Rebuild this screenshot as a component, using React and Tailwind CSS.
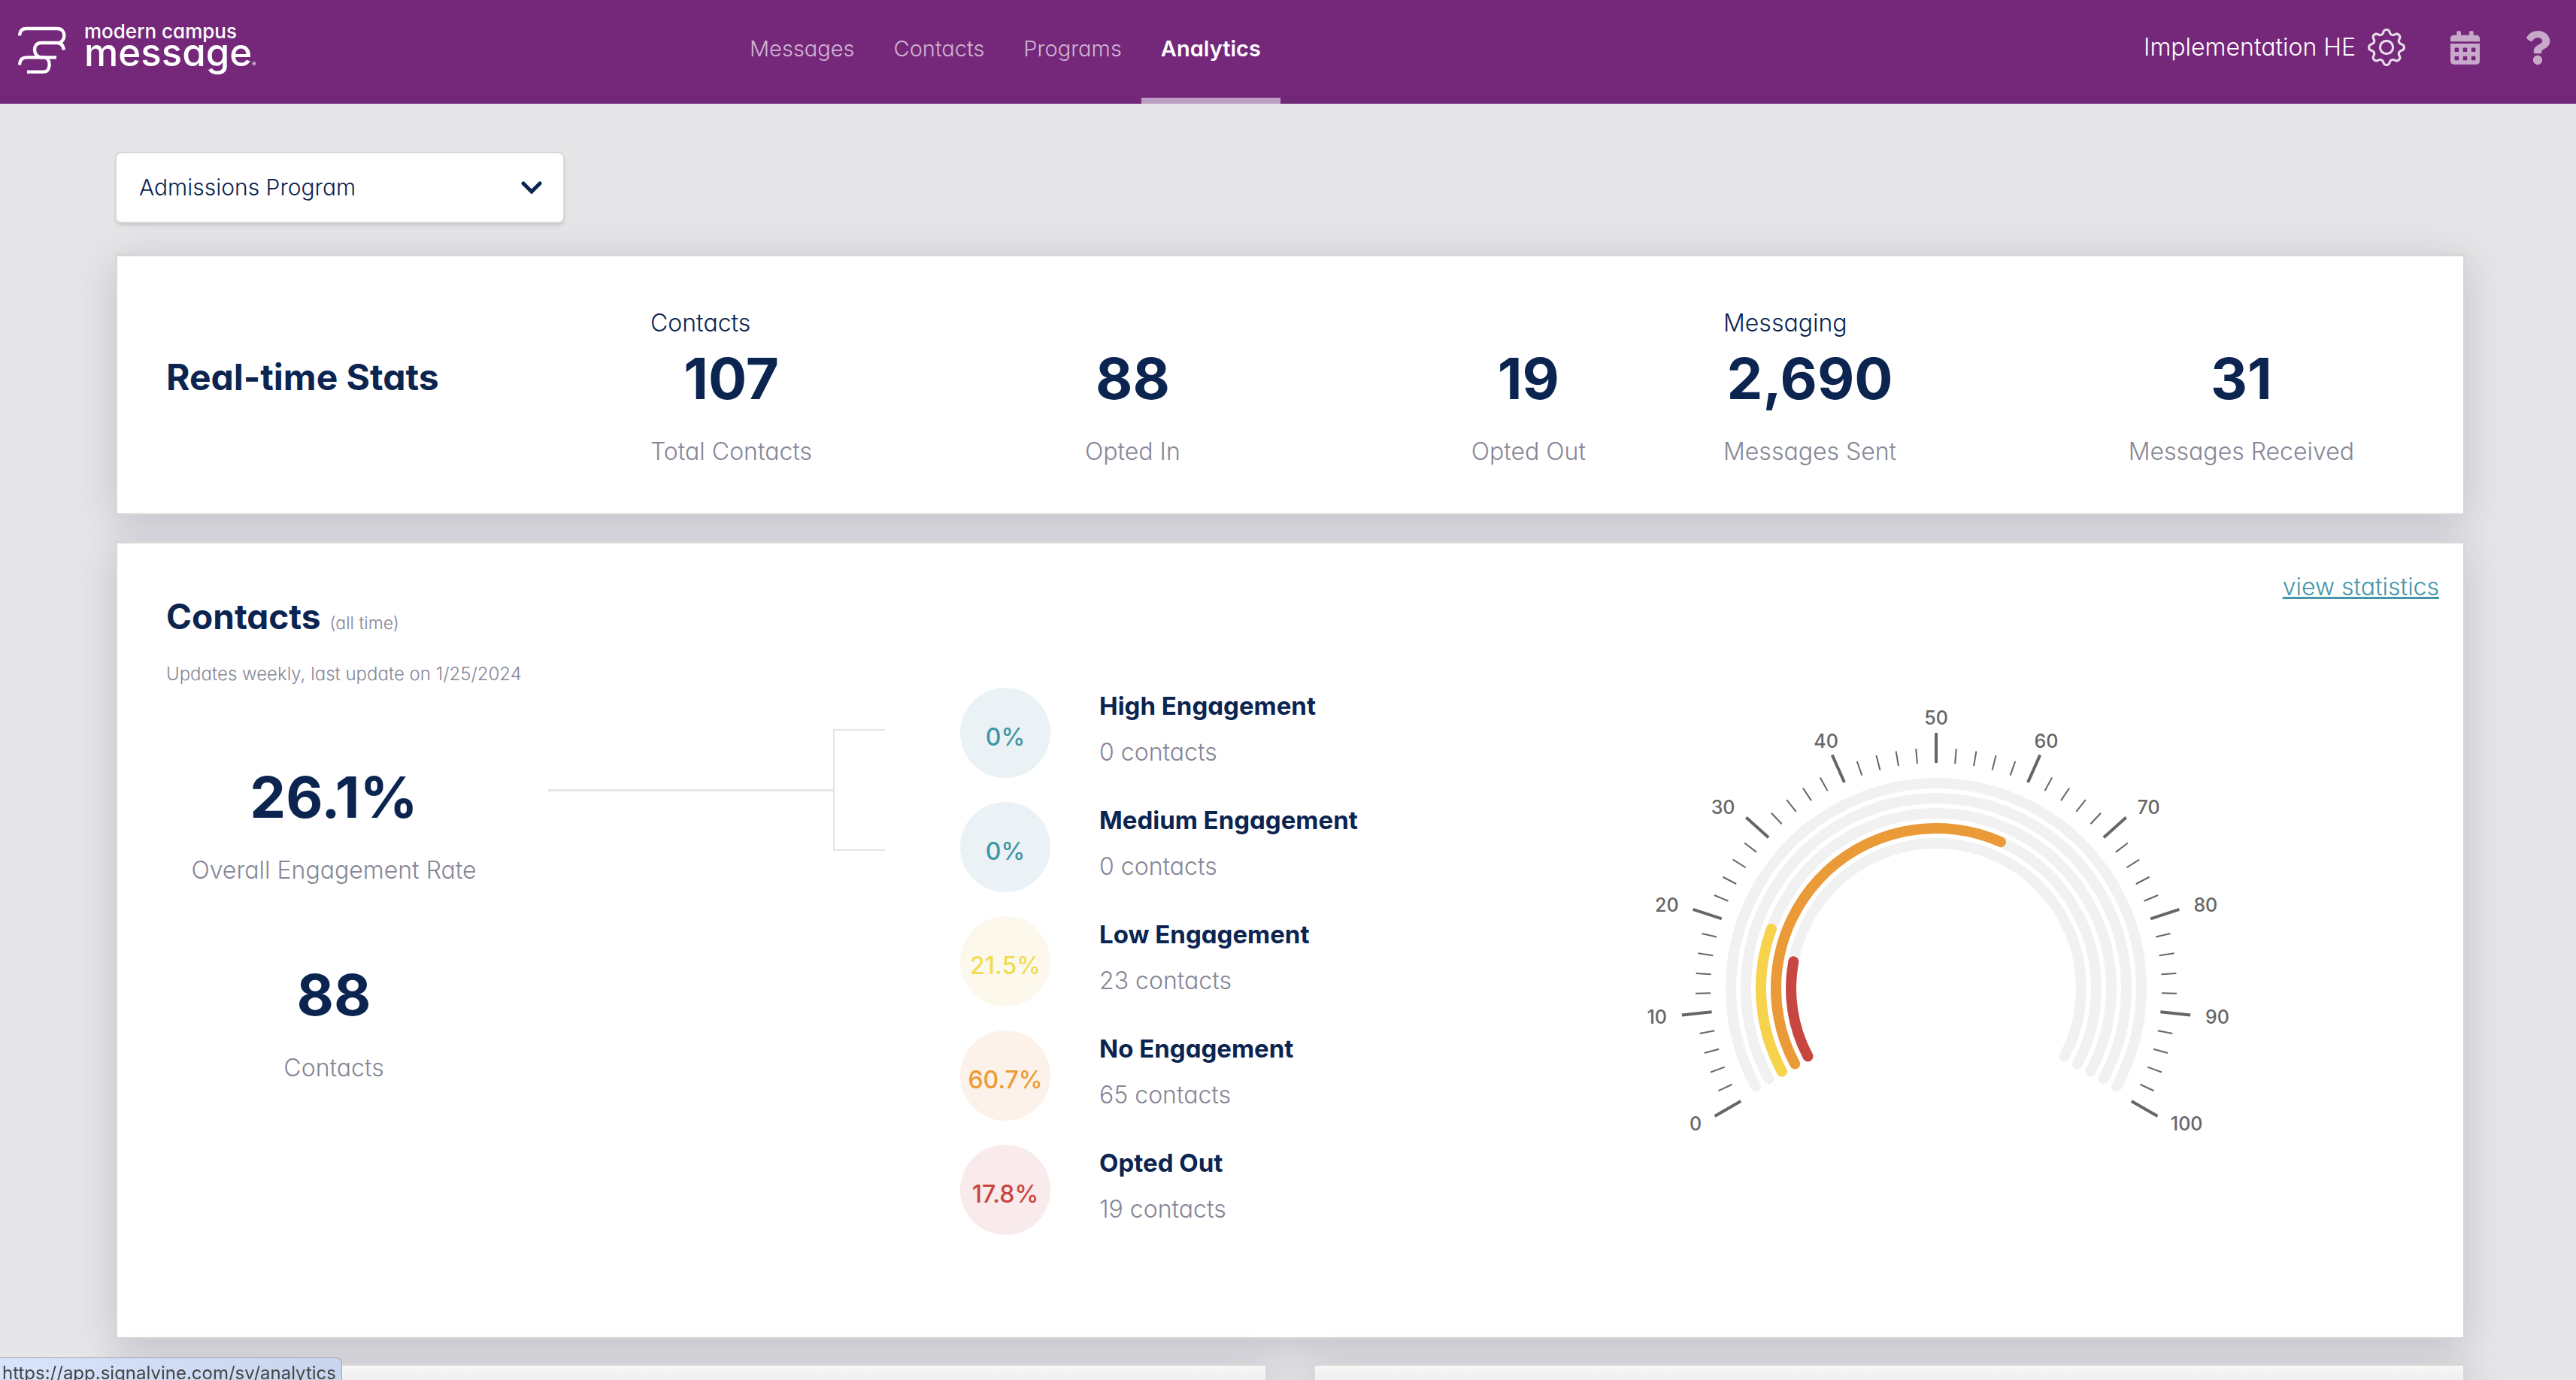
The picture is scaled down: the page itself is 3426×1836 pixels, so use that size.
import React, { useState } from "react";
import { BsGear } from "react-icons/bs";
import { FaCalendarAlt, FaQuestion } from "react-icons/fa";

const navItems = ["Messages", "Contacts", "Programs", "Analytics"];

const contactStats = [
  { value: "107", label: "Total Contacts" },
  { value: "88", label: "Opted In", className: "mr-6" },
  { value: "19", label: "Opted Out" },
];

const messageStats = [
  { value: "2,690", label: "Messages Sent" },
  { value: "31", label: "Messages Received" },
];

const engagement = [
  { name: "High Engagement", percent: 0, contacts: 0, badge: "bg-[#eaf2f5] text-[#3f97a5]", color: "#3f97a5" },
  { name: "Medium Engagement", percent: 0, contacts: 0, badge: "bg-[#eaf2f5] text-[#3f97a5]", color: "#3f97a5" },
  { name: "Low Engagement", percent: 21.5, contacts: 23, badge: "bg-[#fcf9ec] text-[#f0dc55]", color: "#f6d34a" },
  { name: "No Engagement", percent: 60.7, contacts: 65, badge: "bg-[#fcf2e9] text-[#ec9a35]", color: "#eb9a38" },
  { name: "Opted Out", percent: 17.8, contacts: 19, badge: "bg-[#f9eaeb] text-[#cb453f]", color: "#c84640" },
];

const Logo = () => (
  <a href="#home" className="flex items-start pl-6 pt-[30px] text-white">
    <svg viewBox="72 104 192 192" className="mt-[5px] h-16 w-16" fill="none" stroke="currentColor" strokeWidth="13">
      <path d="M78 141C79 124 88 113 105 113H228C247 113 256 126 256 140C256 154 249 164 238 170" />
      <path d="M255 198C252 180 243 170 228 170H165C146 170 138 182 138 197C138 213 148 228 166 228H225" />
      <path d="M78 258C79 240 88 228 106 228H174C190 228 197 243 197 257C197 272 190 286 173 286H108" />
    </svg>
    <span className="ml-6 flex flex-col">
      <span className="text-[26px] leading-6 font-medium">modern campus</span>
      <span className="text-[51px] leading-8 font-medium">
        message<span className="text-[8px]">®</span>
      </span>
    </span>
  </a>
);

const Header = () => (
  <header className="grid h-[138px] shrink-0 grid-cols-[971fr_1400fr_1055fr] bg-linear-to-b from-[#75287a] from-85% to-[#6f2777]">
    <Logo />
    <nav className="flex h-full">
      {navItems.map((item) => (
        <a
          key={item}
          href={`#${item.toLowerCase()}`}
          className={
            item === "Analytics"
              ? "flex items-center border-b-8 border-[#bd9dc1] px-[26px] text-[29px] font-semibold text-white"
              : "flex items-center border-b-8 border-transparent px-[26px] text-[29px] text-[#d1b4d3]"
          }
        >
          {item}
        </a>
      ))}
    </nav>
    <div className="flex items-center justify-end pr-[34px] pb-3 text-[#c8a8cb]">
      <button className="flex items-center gap-4 text-[32px] text-white">
        Implementation HE <BsGear className="size-[50px] text-[#e9dcea]" />
      </button>
      <button aria-label="Calendar" className="ml-[60px]">
        <FaCalendarAlt className="h-[45px] w-[39px]" />
      </button>
      <button aria-label="Help" className="ml-[60px]">
        <FaQuestion className="h-[45px] w-[34px]" />
      </button>
    </div>
  </header>
);

const Card = ({ className, children }) => (
  <section
    className={`border-3 border-t-4 border-b-2 border-[#d7d7d7] shadow-[0_10px_50px_rgba(50,40,80,0.2)] ${className}`}
  >
    {children}
  </section>
);

const Stat = ({ value, label, className = "" }) => (
  <div className={`flex flex-col items-center ${className}`}>
    <span className="text-[76px] leading-[98px] font-bold">{value}</span>
    <span className="mt-[25px] text-[32px] leading-12 whitespace-nowrap text-[#868696]">{label}</span>
  </div>
);

const StatGroup = ({ title, stats, className }) => (
  <div className={className}>
    <h3 className="text-[32px] leading-12">{title}</h3>
    <div className="flex justify-between">
      {stats.map((stat) => (
        <Stat key={stat.label} {...stat} />
      ))}
    </div>
  </div>
);

// Angles run clockwise from twelve o'clock, the scale spans -120 to 120 degrees
const toAngle = (value) => -120 + value * 2.4;

const point = (r, angle) => {
  const rad = (angle * Math.PI) / 180;
  return [r * Math.sin(rad), -r * Math.cos(rad)];
};

const arc = (r, from, to) => {
  // pull both ends in so that the round caps stay inside the range
  const cap = (7 / r) * (180 / Math.PI);
  const start = toAngle(from) + cap;
  const end = toAngle(to) - cap;
  const [x1, y1] = point(r, start);
  const [x2, y2] = point(r, end);
  return `M${x1} ${y1}A${r} ${r} 0 ${end - start > 180 ? 1 : 0} 1 ${x2} ${y2}`;
};

const labelAnchor = (value) => {
  if (value < 40) return "end";
  if (value > 60) return "start";
  return "middle";
};

const Gauge = () => (
  <svg viewBox="-420 -400 840 640" className="w-[840px] max-w-full" role="img" aria-label="Engagement gauge">
    {engagement.map((row, i) => {
      const r = 273 - i * 20;
      return (
        <g key={row.name} fill="none" strokeWidth="14" strokeLinecap="round">
          <path d={arc(r, 0, 100)} stroke="#f1f1f1" />
          {row.percent > 0 && <path d={arc(r, 0, row.percent)} stroke={row.color} />}
        </g>
      );
    })}
    {Array.from({ length: 51 }, (_, i) => {
      const major = i % 5 === 0;
      const angle = toAngle(i * 2);
      const [x1, y1] = point(300, angle);
      const [x2, y2] = point(major ? 340 : 320, angle);
      return <line key={i} x1={x1} y1={y1} x2={x2} y2={y2} stroke="#666" strokeWidth={major ? 4 : 2} />;
    })}
    {Array.from({ length: 11 }, (_, i) => {
      const value = i * 10;
      const [x, y] = point(360, toAngle(value));
      return (
        <text key={value} x={x} y={y + 9} textAnchor={labelAnchor(value)} className="fill-[#666] text-[25px] font-medium">
          {value}
        </text>
      );
    })}
  </svg>
);

const EngagementRow = ({ name, percent, contacts, badge }) => (
  <li className="flex h-[120px] gap-[65px]">
    <span
      className={`flex size-[120px] shrink-0 items-center justify-center rounded-full pt-3 text-[32px] font-medium ${badge}`}
    >
      {percent}%
    </span>
    <div className="whitespace-nowrap">
      <h3 className="text-[33px] leading-12 font-bold">{name}</h3>
      <p className="mt-[14px] text-[32px] leading-12 text-[#868696]">{contacts} contacts</p>
    </div>
  </li>
);

const App = () => {
  const [program, setProgram] = useState("Admissions Program");

  return (
    <div className="flex h-screen flex-col overflow-hidden bg-[#e6e6e8] font-['Inter',sans-serif] font-light text-[#0b2450] [font-feature-settings:'cv11']">
      <Header />

      <main className="pt-16 pr-[147px] pl-[153px]">
        <div className="relative h-[95px] w-[598px]">
          <select
            aria-label="Program"
            value={program}
            onChange={(e) => setProgram(e.target.value)}
            className="h-full w-full appearance-none rounded-lg border-2 border-[#d9d9d9] bg-white pl-[30px] text-[30px] shadow-md"
          >
            <option>Admissions Program</option>
          </select>
          <svg
            viewBox="0 0 28 18"
            className="pointer-events-none absolute top-[39px] right-[30px] h-[18px] w-7"
            fill="none"
            stroke="currentColor"
            strokeWidth="5"
            strokeLinecap="round"
          >
            <path d="M3 3L14 14L25 3" />
          </svg>
        </div>

        {/* Real-time stats */}
        <Card className="mt-10 grid grid-cols-[709fr_1427fr_984fr] bg-white pt-[65px] pb-[58px]">
          <h2 className="flex items-center pb-7 pl-[65px] text-[48px] font-bold whitespace-nowrap">Real-time Stats</h2>
          <StatGroup title="Contacts" stats={contactStats} className="pr-[183px]" />
          <StatGroup title="Messaging" stats={messageStats} className="pr-[145px]" />
        </Card>

        {/* Contacts */}
        <Card className="mt-[34px] bg-white pb-[136px]">
          <div className="flex h-48 items-start justify-between pr-8 pl-[65px]">
            <div className="pt-[65px]">
              <div className="flex items-baseline gap-3">
                <h2 className="text-[46px] leading-16 font-bold">Contacts</h2>
                <span className="text-[23px] text-[#868696]">(all time)</span>
              </div>
              <p className="mt-[27px] text-[24px] leading-9 text-[#868696]">
                Updates weekly, last update on 1/25/2024
              </p>
            </div>
            <a href="#statistics" className="mt-[34px] text-[32px] leading-12 text-[#4496a8] underline decoration-3">
              view statistics
            </a>
          </div>

          <div className="grid grid-cols-[573fr_548fr_597fr_1402fr] items-start">
            <div className="flex flex-col gap-[92px] pt-24 pr-16 pl-[67px]">
              <Stat value="26.1%" label="Overall Engagement Rate" />
              <Stat value="88" label="Contacts" />
            </div>
            <div className="mt-[55px] flex h-[162px] items-center pr-[100px]">
              <div className="h-[3px] flex-1 bg-[#e5e5e5]" />
              <div className="h-full w-[69px] border-2 border-r-0 border-[#e5e5e5]" />
            </div>
            <ul className="flex flex-col gap-8">
              {engagement.map((row) => (
                <EngagementRow key={row.name} {...row} />
              ))}
            </ul>
            <div className="flex justify-center">
              <Gauge />
            </div>
          </div>
        </Card>

        <div className="mt-8 grid grid-cols-2 gap-[60px]">
          <Card className="h-60 bg-linear-to-b from-[#f7f7f7] to-[#ededed] to-10%" />
          <Card className="h-60 bg-linear-to-b from-[#f7f7f7] to-[#ededed] to-10%" />
        </div>
      </main>

      {/* Link target bubble, partly below the fold */}
      <div className="fixed bottom-0 left-0 h-[30px] w-[455px] overflow-hidden rounded-tr-lg border-t border-r border-[#a5a5ad] bg-linear-to-r from-[#d8e3fc] to-[#c9d4ee] pl-[3px] text-[24px] leading-10 font-normal whitespace-nowrap text-[#454545] [font-feature-settings:normal]">
        https://app.signalvine.com/sv/analytics
      </div>
    </div>
  );
};

export default App;
